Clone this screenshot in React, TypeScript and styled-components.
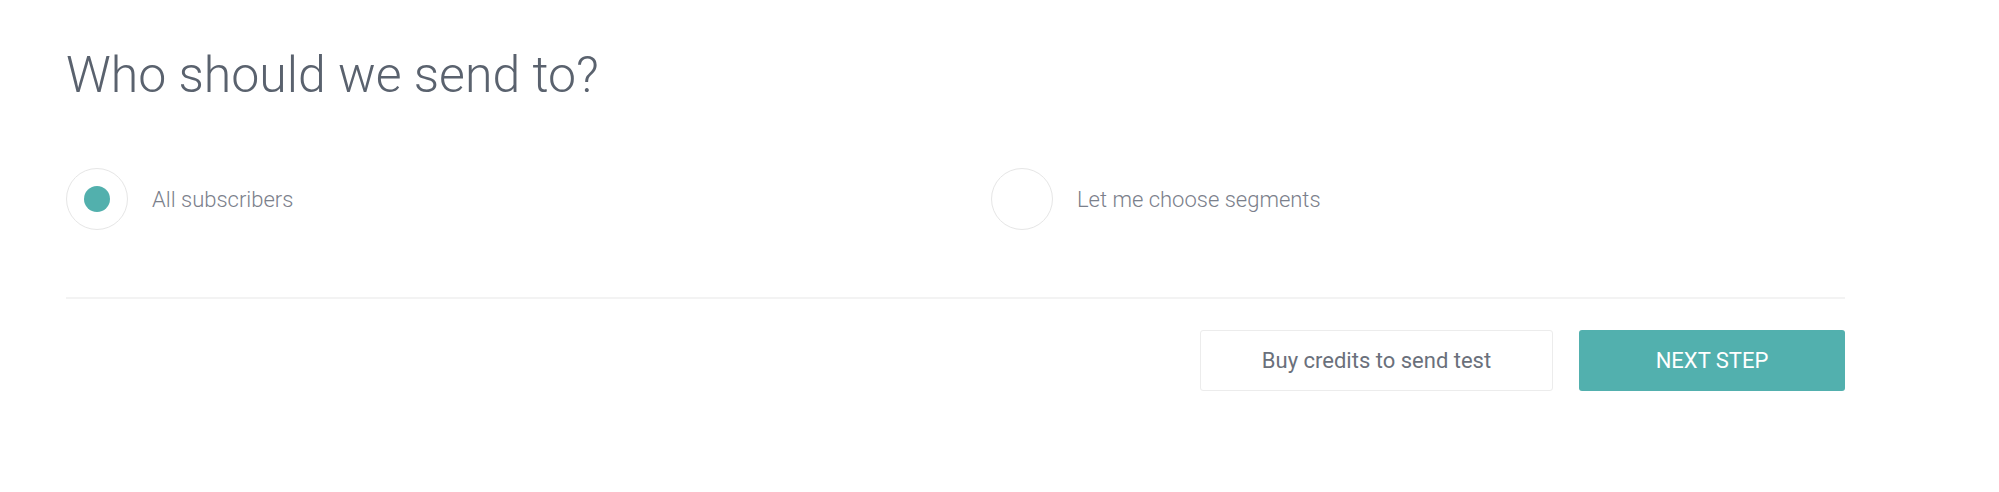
import { useState } from "react";
import styled, { createGlobalStyle } from "styled-components";

const GlobalStyle = createGlobalStyle`
  body {
    margin: 0;
    background: #ffffff;
    font-family: Roboto, "Liberation Sans", sans-serif;
  }
`;

type Audience = "all" | "segments";

const options: { value: Audience; label: string }[] = [
  { value: "all", label: "All subscribers" },
  { value: "segments", label: "Let me choose segments" },
];

const App = () => {
  const [audience, setAudience] = useState<Audience>("all");

  return (
    <>
      <GlobalStyle />
      <Page>
        <Title>Who should we send to?</Title>
        <RadioGroup role="radiogroup">
          {options.map((opt) => (
            <RadioOption
              key={opt.value}
              role="radio"
              aria-checked={audience === opt.value}
              onClick={() => setAudience(opt.value)}
            >
              <RadioCircle>
                {audience === opt.value && <RadioDot />}
              </RadioCircle>
              <RadioLabel>{opt.label}</RadioLabel>
            </RadioOption>
          ))}
        </RadioGroup>
        <Divider />
        <Footer>
          <SecondaryButton>Buy credits to send test</SecondaryButton>
          <PrimaryButton>NEXT STEP</PrimaryButton>
        </Footer>
      </Page>
    </>
  );
};

export default App;

const Page = styled.div`
  width: 1779px;
  margin-left: 66px;
  padding-top: 45px;
  height: 447px;
`;

const Title = styled.h1`
  margin: 0;
  font-family: Roboto, "Liberation Sans", sans-serif;
  font-weight: 300;
  font-size: 50px;
  line-height: 60px;
  color: #5a626e;
`;

const RadioGroup = styled.div`
  display: grid;
  grid-template-columns: 1fr 1fr;
  column-gap: 71px;
  margin-top: 63px;
`;

const RadioOption = styled.div`
  display: flex;
  align-items: center;
  gap: 24px;
  cursor: pointer;
`;

const RadioCircle = styled.div`
  box-sizing: border-box;
  width: 62px;
  height: 62px;
  border: 1px solid #e6e6e6;
  border-radius: 50%;
  display: flex;
  align-items: center;
  justify-content: center;
  flex-shrink: 0;
`;

const RadioDot = styled.div`
  width: 26px;
  height: 26px;
  border-radius: 50%;
  background: #52b0ad;
`;

const RadioLabel = styled.span`
  font-weight: 300;
  font-size: 22px;
  color: #7b808b;
`;

const Divider = styled.hr`
  margin: 67px 0 0;
  border: none;
  height: 2px;
  background: #f3f3f3;
`;

const Footer = styled.div`
  display: flex;
  justify-content: flex-end;
  gap: 26px;
  margin-top: 31px;
`;

const ButtonBase = styled.button`
  box-sizing: border-box;
  height: 61px;
  border-radius: 3px;
  font-family: Roboto, "Liberation Sans", sans-serif;
  font-size: 22px;
  cursor: pointer;
`;

const SecondaryButton = styled(ButtonBase)`
  width: 353px;
  background: #ffffff;
  border: 1px solid #ececec;
  color: #6a707b;
  font-weight: 400;
`;

const PrimaryButton = styled(ButtonBase)`
  width: 266px;
  background: #52b0ae;
  border: none;
  color: #ffffff;
  font-weight: 400;
`;
